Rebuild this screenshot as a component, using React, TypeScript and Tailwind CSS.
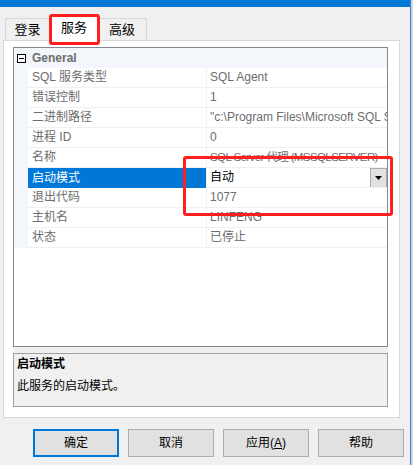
import React from "react";

const font = { fontFamily: '"Liberation Sans", "Noto Sans CJK SC", sans-serif' };

const rows: { label: string; value: string; tight?: boolean }[] = [
  { label: "SQL 服务类型", value: "SQL Agent" },
  { label: "错误控制", value: "1" },
  { label: "二进制路径", value: '"c:\\Program Files\\Microsoft SQL Server\\MSSQL' },
  { label: "进程 ID", value: "0" },
  { label: "名称", value: "SQL Server 代理 (MSSQLSERVER)", tight: true },
  { label: "启动模式", value: "自动" },
  { label: "退出代码", value: "1077" },
  { label: "主机名", value: "LINFENG" },
  { label: "状态", value: "已停止" },
];

function Row({ label, value, tight }: { label: string; value: string; tight?: boolean }) {
  const selected = label === "启动模式";
  return (
    <div className="flex h-[20px]">
      <div className="w-[14px] shrink-0 bg-[#f3f6fb]" />
      <div
        className={
          selected
            ? "w-[178px] shrink-0 pl-[4px] leading-[20px] bg-[#0078d7] text-white whitespace-nowrap overflow-hidden"
            : "w-[178px] shrink-0 pl-[4px] leading-[19px] text-[#6d6d6d] border-b border-[#f0f0f0] whitespace-nowrap overflow-hidden"
        }
      >
        {label}
      </div>
      <div className="w-px shrink-0 bg-[#f0f0f0]" />
      <div
        className={
          selected
            ? "relative flex-1 pl-[3px] leading-[19px] text-black border-b border-[#f0f0f0] whitespace-nowrap overflow-hidden"
            : tight
            ? "flex-1 pl-[3px] leading-[19px] text-[#6d6d6d] border-b border-[#f0f0f0] whitespace-nowrap overflow-hidden tracking-[-0.6px] text-[11.5px]"
            : "flex-1 pl-[3px] leading-[19px] text-[#6d6d6d] border-b border-[#f0f0f0] whitespace-nowrap overflow-hidden"
        }
      >
        {value}
        {selected && (
          <div className="absolute right-0 top-0 w-[17px] h-[20px] bg-[#e1e1e1] border border-[#adadad] flex items-center justify-center">
            <svg width="7" height="4" viewBox="0 0 7 4">
              <path d="M0 0h7L3.5 4z" fill="#000" />
            </svg>
          </div>
        )}
      </div>
    </div>
  );
}

export default function App() {
  return (
    <div className="relative w-[413px] h-[465px] bg-[#d3d6da] overflow-hidden text-[12px]" style={font}>
      <div className="w-[411px] h-[465px] bg-[#f0f0f0] border-r border-[#3c7fd1] flex flex-col">
        <div className="h-[7px] bg-[#0078d7]" />

        {/* tabs */}
        <div className="flex items-end pl-[5px] mt-[8px] h-[25px]">
          <div className="w-[45px] h-[22px] border border-b-0 border-[#d9d9d9] bg-[#f0f0f0] text-black text-center leading-[22px] text-[13px]">
            登录
          </div>
          <div className="w-[48px] h-[25px] -mb-px border border-b-0 border-[#d9d9d9] bg-white text-black text-center leading-[22px] text-[13px] relative z-10">
            服务
          </div>
          <div className="w-[49px] h-[22px] border border-b-0 border-l-0 border-[#d9d9d9] bg-[#f0f0f0] text-black text-center leading-[22px] text-[13px]">
            高级
          </div>
        </div>

        {/* tab panel */}
        <div className="ml-[3px] w-[397px] h-[378px] border border-[#d9d9d9] bg-white pl-[9px] pt-[6px]">
          <div className="w-[375px] h-[360px] flex flex-col bg-[#f0f0f0]">
            <div className="h-[300px] border border-[#828790] bg-white">
              <div className="flex h-[20px] bg-[#f3f6fb]">
                <div className="w-[14px] shrink-0 flex items-center justify-center">
                  <div className="w-[9px] h-[9px] border border-black bg-white flex items-center justify-center">
                    <div className="w-[5px] h-px bg-black" />
                  </div>
                </div>
                <div className="pl-[4px] leading-[20px] font-bold text-[#6d6d6d]">General</div>
              </div>
              {rows.map((r) => (
                <Row key={r.label} {...r} />
              ))}
            </div>
            <div className="h-[6px]" />
            <div className="h-[54px] border border-[#a0a0a0] px-[3px] pt-[1px]">
              <div className="font-bold text-black leading-[18px]">启动模式</div>
              <div className="text-black leading-[18px] mt-[4px]">此服务的启动模式。</div>
            </div>
          </div>
        </div>

        {/* buttons */}
        <div className="flex gap-[9px] pl-[33px] mt-[11px]">
          <button className="w-[86px] h-[28px] bg-[#e1e1e1] border-2 border-[#0078d7] text-black">确定</button>
          <button className="w-[86px] h-[28px] bg-[#e1e1e1] border border-[#adadad] text-black">取消</button>
          <button className="w-[86px] h-[28px] bg-[#e1e1e1] border border-[#adadad] text-black">
            应用(<span className="underline">A</span>)
          </button>
          <button className="w-[86px] h-[28px] bg-[#e1e1e1] border border-[#adadad] text-black">帮助</button>
        </div>
      </div>

      {/* red highlight boxes */}
      <div className="absolute left-[49px] top-[14px] w-[51px] h-[31px] border-[3px] border-[#ff1f1f] rounded-[3px] z-20" />
      <div className="absolute left-[183px] top-[156px] w-[210px] h-[60px] border-[3px] border-[#ff1f1f] rounded-[3px] z-20" />
    </div>
  );
}
